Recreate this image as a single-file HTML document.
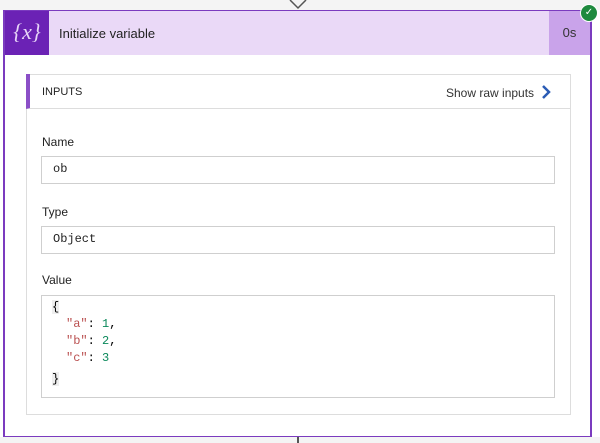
<!DOCTYPE html>
<html><head><style>
body{margin:0;width:600px;height:443px;background:#fff;position:relative;overflow:hidden;font-family:"Liberation Sans",sans-serif;}
.abs{position:absolute;}
.lbl{position:absolute;left:42px;font-size:12px;color:#222;}
.inp{position:absolute;left:41px;width:514px;border:1px solid #cfcfcf;background:#fff;font-family:"Liberation Mono",monospace;font-size:12px;color:#222;box-sizing:border-box;}
.code{font-family:"Liberation Mono",monospace;font-size:12px;position:absolute;left:52px;}
.k{color:#a31515;opacity:.75}.n{color:#09885a}
</style></head><body>
<div class="abs" style="left:0;top:0;width:600px;height:10px;background:#f4f4f4"></div>
<svg class="abs" style="left:288px;top:0" width="20" height="10"><path d="M2 0 L10 8 L18 0" fill="none" stroke="#555" stroke-width="1.5"/></svg>
<div class="abs" style="left:3px;top:10px;width:585px;height:425px;border:2px solid #7b3bbf;border-top:1px solid #7b3bbf;background:#fff"></div>
<div class="abs" style="left:5px;top:11px;width:585px;height:44px;background:#ead9f7"></div>
<div class="abs" style="left:5px;top:11px;width:44px;height:44px;background:#6b22b5;color:#e6d4f7;font-family:'Liberation Serif',serif;font-size:22px;line-height:42px;text-align:center;font-style:italic">{<i>x</i>}</div>
<div class="abs" style="left:59px;top:26px;font-size:13px;color:#222">Initialize variable</div>
<div class="abs" style="left:549px;top:11px;width:41px;height:44px;background:#c9a3ea;font-size:13px;color:#333;line-height:44px;text-align:center">0s</div>
<div class="abs" style="left:580px;top:4px;width:16px;height:16px;border-radius:50%;background:#1e8a3e;border:1px solid #fff;color:#fff;font-size:10px;line-height:16px;text-align:center">✓</div>
<div class="abs" style="left:26px;top:74px;width:545px;height:341px;border:1px solid #ddd;box-sizing:border-box;background:#fff"></div>
<div class="abs" style="left:26px;top:74px;width:545px;height:35px;border-bottom:1px solid #ddd;box-sizing:border-box;border-left:4px solid #8b4fc7"></div>
<div class="abs" style="left:42px;top:86px;font-size:11px;color:#222">INPUTS</div>
<div class="abs" style="left:446px;top:86px;font-size:12px;color:#333">Show raw inputs</div>
<svg class="abs" style="left:540px;top:84px" width="12" height="16"><path d="M3 2 L9 8 L3 14" fill="none" stroke="#2b5cb5" stroke-width="2.5"/></svg>
<div class="lbl" style="top:135px">Name</div>
<div class="inp" style="top:156px;height:28px;padding:5px 11px">ob</div>
<div class="lbl" style="top:205px">Type</div>
<div class="inp" style="top:226px;height:28px;padding:5px 11px">Object</div>
<div class="lbl" style="top:273px">Value</div>
<div class="inp" style="top:295px;height:103px"></div>
<div class="code" style="top:300px;background:#eee">{</div>
<div class="code" style="top:317px;left:66px"><span class="k">"a"</span>: <span class="n">1</span>,</div>
<div class="code" style="top:334px;left:66px"><span class="k">"b"</span>: <span class="n">2</span>,</div>
<div class="code" style="top:351px;left:66px"><span class="k">"c"</span>: <span class="n">3</span></div>
<div class="code" style="top:372px;background:#eee">}</div>
<div class="abs" style="left:0;top:437px;width:600px;height:6px;background:#f4f4f4"></div>
<div class="abs" style="left:297px;top:437px;width:2px;height:6px;background:#555"></div>
</body></html>
